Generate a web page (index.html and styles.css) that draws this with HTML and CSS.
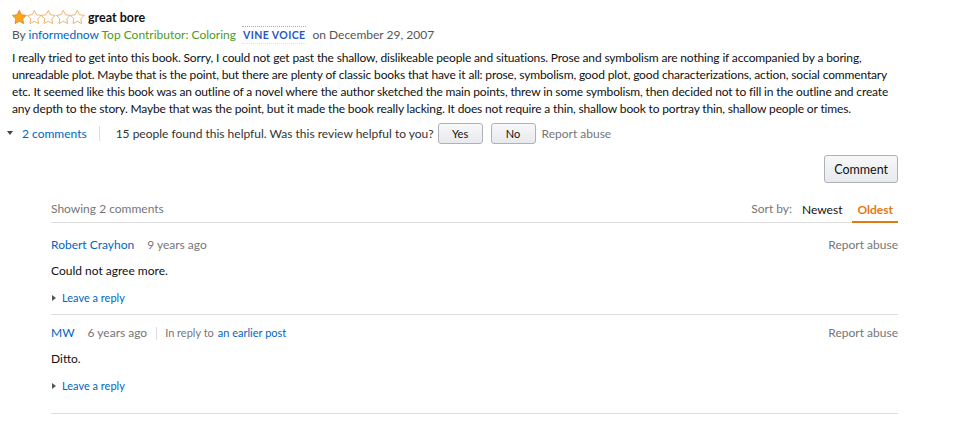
FILE: index.html
```html
<!DOCTYPE html>
<html>
<head>
<meta charset="utf-8">
<link rel="stylesheet" href="styles.css">
</head>
<body>
<div class="review">
  <div class="title-row">
    <span class="stars">
      <svg class="star" viewBox="1.5 1.5 21 21"><path class="on" d="M12 2l3.09 6.26L22 9.27l-5 4.87 1.18 6.88L12 17.77l-6.18 3.25L7 14.14 2 9.27l6.91-1.01L12 2z"/></svg>
      <svg class="star" viewBox="1.5 1.5 21 21"><path class="off" d="M12 2l3.09 6.26L22 9.27l-5 4.87 1.18 6.88L12 17.77l-6.18 3.25L7 14.14 2 9.27l6.91-1.01L12 2z"/></svg>
      <svg class="star" viewBox="1.5 1.5 21 21"><path class="off" d="M12 2l3.09 6.26L22 9.27l-5 4.87 1.18 6.88L12 17.77l-6.18 3.25L7 14.14 2 9.27l6.91-1.01L12 2z"/></svg>
      <svg class="star" viewBox="1.5 1.5 21 21"><path class="off" d="M12 2l3.09 6.26L22 9.27l-5 4.87 1.18 6.88L12 17.77l-6.18 3.25L7 14.14 2 9.27l6.91-1.01L12 2z"/></svg>
      <svg class="star" viewBox="1.5 1.5 21 21"><path class="off" d="M12 2l3.09 6.26L22 9.27l-5 4.87 1.18 6.88L12 17.77l-6.18 3.25L7 14.14 2 9.27l6.91-1.01L12 2z"/></svg>
    </span>
    <span class="title">great bore</span>
  </div>
  <div class="byline">By <a class="link">informednow</a> <span class="green">Top Contributor: Coloring</span> <span class="vine">VINE VOICE</span> on December 29, 2007</div>
  <p class="body">I really tried to get into this book. Sorry, I could not get past the shallow, dislikeable people and situations. Prose and symbolism are nothing if accompanied by a boring, unreadable plot. Maybe that is the point, but there are plenty of classic books that have it all: prose, symbolism, good plot, good characterizations, action, social commentary etc. It seemed like this book was an outline of a novel where the author sketched the main points, threw in some symbolism, then decided not to fill in the outline and create any depth to the story. Maybe that was the point, but it made the book really lacking. It does not require a thin, shallow book to portray thin, shallow people or times.</p>
  <div class="actions">
    <span class="caret-down"></span>
    <a class="link">2 comments</a>
    <span class="sep"></span>
    <span class="helpful">15 people found this helpful. Was this review helpful to you?</span>
    <button class="vote">Yes</button>
    <button class="vote">No</button>
    <span class="report">Report abuse</span>
  </div>
  <div class="comment-btn-row"><button class="comment-btn">Comment</button></div>
  <div class="comments">
    <div class="comments-head">
      <span class="showing">Showing 2 comments</span>
      <span class="sort">
        <span class="sort-label">Sort by:</span>
        <span class="sort-opt">Newest</span>
        <span class="sort-opt active">Oldest</span>
      </span>
    </div>
    <div class="comment first">
      <div class="c-head">
        <span class="c-meta"><a class="link">Robert Crayhon</a><span class="ago">9 years ago</span></span>
        <span class="report">Report abuse</span>
      </div>
      <div class="c-text">Could not agree more.</div>
      <div class="reply"><span class="caret-right"></span><a class="link">Leave a reply</a></div>
    </div>
    <div class="comment last">
      <div class="c-head">
        <span class="c-meta"><a class="link">MW</a><span class="ago">6 years ago</span><span class="sep small"></span><span class="inreply">In reply to</span><a class="link small-link">an earlier post</a></span>
        <span class="report">Report abuse</span>
      </div>
      <div class="c-text">Ditto.</div>
      <div class="reply"><span class="caret-right"></span><a class="link">Leave a reply</a></div>
    </div>
  </div>
</div>
</body>
</html>
```

FILE: styles.css
```css
html, body {
  margin: 0;
  padding: 0;
  background: #fff;
}
body {
  font-family: Lato, "Liberation Sans", Arial, sans-serif;
  font-size: 12px;
  color: #111;
}
.review {
  padding: 8px 0 0 12px;
  width: 886px;
}
.link {
  color: #0066c0;
  text-decoration: none;
}
.title-row {
  display: flex;
  align-items: center;
  height: 18px;
}
.stars {
  display: flex;
  margin-right: 3px;
}
.star {
  width: 14.6px;
  height: 14.6px;
}
.star .on {
  fill: #ffa41c;
  stroke: #d8861a;
  stroke-width: 1.2;
}
.star .off {
  fill: #fff;
  stroke: #e2a75a;
  stroke-width: 1.2;
}
.title {
  font-weight: bold;
  font-size: 12.5px;
  color: #111;
}
.byline {
  line-height: 17px;
  color: #555;
}
.green {
  color: #4d9a26;
}
.vine {
  color: #1f5ac0;
  font-weight: bold;
  font-size: 10.5px;
  letter-spacing: 0.4px;
  padding: 2px 1px;
  margin: 0 3px;
  border-top: 1px dotted #aab;
  border-bottom: 1px dotted #dde;
}
.body {
  margin: 5px 0 0;
  line-height: 17px;
  letter-spacing: -0.15px;
  color: #111;
}
.actions {
  display: flex;
  align-items: center;
  height: 22px;
  margin-top: 5px;
}
.caret-down {
  width: 0;
  height: 0;
  border-left: 3px solid transparent;
  border-right: 3px solid transparent;
  border-top: 4px solid #444;
  margin: 0 9px 0 -5px;
}
.sep {
  width: 1px;
  height: 15px;
  background: #ddd;
  margin: 0 16px 0 12px;
}
.sep.small {
  height: 13px;
  margin: 0 8px 0 9px;
}
.helpful {
  color: #333;
}
.vote {
  font-family: inherit;
  font-size: 11px;
  color: #111;
  width: 45px;
  height: 21px;
  padding: 0;
  margin-left: 4px;
  border: 1px solid #adb1b8;
  border-radius: 3px;
  background: linear-gradient(#f7f8fa, #e7e9ec);
}
.vote + .vote {
  margin-left: 8px;
}
.report {
  color: #767676;
  margin-left: 6px;
}
.comment-btn-row {
  display: flex;
  justify-content: flex-end;
  margin-top: 11px;
}
.comment-btn {
  font-family: inherit;
  font-size: 12.5px;
  color: #111;
  height: 28px;
  padding: 0 9px;
  border: 1px solid #adb1b8;
  border-radius: 3px;
  background: linear-gradient(#f7f8fa, #e7e9ec);
}
.comments {
  margin-left: 39px;
}
.comments-head {
  display: flex;
  justify-content: space-between;
  align-items: flex-end;
  margin-top: 17px;
  border-bottom: 1px solid #ddd;
}
.showing {
  color: #767676;
  line-height: 18px;
  padding-bottom: 4px;
}
.sort {
  display: flex;
  align-items: flex-end;
}
.sort-label {
  color: #767676;
  line-height: 18px;
  padding-bottom: 4px;
  margin-right: 5px;
}
.sort-opt {
  color: #111;
  line-height: 18px;
  padding: 0 5px 2px;
  border-bottom: 2px solid transparent;
  margin-bottom: -1px;
}
.sort-opt.active {
  color: #e47911;
  font-weight: bold;
  border-bottom-color: #e47911;
  margin-left: 5px;
}
.comment {
  border-bottom: 1px solid #ddd;
  padding-top: 9px;
  padding-bottom: 8px;
}
.comment.first {
  padding-top: 13px;
}
.comment.last {
  padding-bottom: 19px;
}
.c-head {
  display: flex;
  justify-content: space-between;
  align-items: center;
  line-height: 18px;
}
.c-meta {
  display: flex;
  align-items: center;
}
.ago {
  color: #767676;
  margin-left: 13px;
}
.inreply {
  color: #767676;
  font-size: 11px;
  margin-right: 4px;
}
.small-link {
  font-size: 11px;
}
.c-text {
  margin-top: 8px;
  line-height: 18px;
}
.reply {
  display: flex;
  align-items: center;
  margin-top: 10px;
  font-size: 11px;
  line-height: 16px;
}
.caret-right {
  width: 0;
  height: 0;
  border-top: 3px solid transparent;
  border-bottom: 3px solid transparent;
  border-left: 4px solid #555;
  margin: 0 6px 0 1px;
}
```
